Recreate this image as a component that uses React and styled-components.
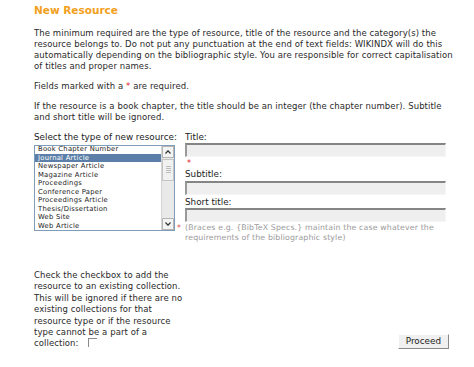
import styled, { createGlobalStyle } from "styled-components"

const GlobalStyle = createGlobalStyle`
  body {
    margin: 0;
    background: #fff;
    font-family: "DejaVu Sans", Verdana, sans-serif;
    color: #2a2a2a;
  }
`

const Page = styled.div`
  padding: 3px 0 0 34px;
  width: 421px;
`

const Heading = styled.h2`
  margin: 0;
  font-size: 10.5px;
  line-height: 14px;
  font-weight: 700;
  color: #f2a020;
`

const Para = styled.p`
  margin: ${(p) => p.$top || 9}px 0 0;
  font-size: 8.5px;
  letter-spacing: 0.08px;
  line-height: 11px;
`

const Star = styled.span`
  color: #e0202a;
`

const Form = styled.div`
  display: grid;
  grid-template-columns: 141px 261px;
  column-gap: 10px;
  margin-top: 9px;
`

const Label = styled.div`
  font-size: 8.8px;
  line-height: 11px;
  color: #222;
  white-space: nowrap;
`

const Column = styled.div`
  display: flex;
  flex-direction: column;
`

const ListBox = styled.div`
  margin-top: 2px;
  height: 84px;
  border: 1px solid #7f9db9;
  display: flex;
  background: #fff;
  overflow: hidden;
`

const Options = styled.div`
  flex: 1;
  margin-top: -0.5px;
`

const Option = styled.div`
  height: 8.5px;
  line-height: 8.5px;
  padding-left: 3px;
  font-size: 6.8px;
  letter-spacing: 0.25px;
  white-space: nowrap;
  color: ${(p) => (p.$selected ? "#fff" : "#222")};
  background: ${(p) => (p.$selected ? "#5b7fa8" : "transparent")};
`

const Scrollbar = styled.div`
  width: 12px;
  background: #e9e9e9;
  border-left: 1px solid #d4d4d4;
  display: flex;
  flex-direction: column;
`

const ScrollButton = styled.div`
  height: 10px;
  margin-top: ${(p) => (p.$bottom ? "auto" : "0")};
  background: #f4f4f4;
  border: 1px solid #b5b5b5;
  display: flex;
  align-items: center;
  justify-content: center;
`

const Thumb = styled.div`
  margin-top: 1px;
  height: 20px;
  background: #f1f1f1;
  border: 1px solid #c4c4c4;
  display: flex;
  flex-direction: column;
  justify-content: center;
  align-items: center;
  gap: 1px;
`

const Grip = styled.div`
  width: 5px;
  height: 1px;
  background: #bbb;
`

const Input = styled.div`
  margin-top: ${(p) => p.$top || 0}px;
  height: 11px;
  background: #efefef;
  border-top: 2px solid #858585;
  border-left: 2px solid #9a9a9a;
  border-bottom: 1px solid #f6f6f6;
  border-right: 1px solid #f6f6f6;
`

const FieldLabel = styled(Label)`
  margin-top: ${(p) => p.$top || 0}px;
`

const Required = styled.div`
  height: 12px;
  font-size: 8px;
  line-height: 13px;
  color: #e0202a;
  padding-left: 2px;
`

const Hint = styled.div`
  position: relative;
  margin-top: 1px;
  font-size: 7.8px;
  letter-spacing: 0.15px;
  line-height: 10px;
  color: #9a9a9a;
`

const HintStar = styled.span`
  position: absolute;
  left: -8px;
  top: 0;
  color: #e0202a;
`

const Bottom = styled.div`
  margin-top: 27px;
  display: flex;
  justify-content: space-between;
  align-items: flex-end;
`

const Note = styled.div`
  width: 150px;
  font-size: 8.5px;
  letter-spacing: 0.08px;
  line-height: 11.4px;
`

const Checkbox = styled.span`
  display: inline-block;
  vertical-align: -1px;
  margin-left: 9px;
  width: 8px;
  height: 8px;
  border-top: 1px solid #8a8a8a;
  border-left: 1px solid #8a8a8a;
`

const Button = styled.button`
  margin: 0 6px 1px 0;
  padding: 0 7px;
  height: 15px;
  font-family: "DejaVu Sans", Verdana, sans-serif;
  font-size: 8.8px;
  line-height: 13px;
  color: #222;
  background: #f0f0f0;
  border: 1px solid #fff;
  border-right-color: #8a8a8a;
  border-bottom-color: #8a8a8a;
`

const types = [
  "Book Chapter Number",
  "Journal Article",
  "Newspaper Article",
  "Magazine Article",
  "Proceedings",
  "Conference Paper",
  "Proceedings Article",
  "Thesis/Dissertation",
  "Web Site",
  "Web Article",
  "Web Encyclopedia",
]

function Arrow({ down }) {
  return (
    <svg width="6" height="4" viewBox="0 0 6 4">
      <path
        d={down ? "M0.5 0.5 L3 3.2 L5.5 0.5" : "M0.5 3.5 L3 0.8 L5.5 3.5"}
        fill="none"
        stroke="#333"
        strokeWidth="1.2"
      />
    </svg>
  )
}

export default function App() {
  return (
    <>
      <GlobalStyle />
      <Page>
        <Heading>New Resource</Heading>
        <Para $top={10.5}>
          The minimum required are the type of resource, title of the resource
          and the category(s) the resource belongs to. Do not put any
          punctuation at the end of text fields: WIKINDX will do this
          automatically depending on the bibliographic style. You are
          responsible for correct capitalisation of titles and proper names.
        </Para>
        <Para>
          Fields marked with a <Star>*</Star> are required.
        </Para>
        <Para>
          If the resource is a book chapter, the title should be an integer
          (the chapter number). Subtitle and short title will be ignored.
        </Para>
        <Form>
          <Column>
            <Label>Select the type of new resource:</Label>
            <ListBox>
              <Options>
                {types.map((t) => (
                  <Option key={t} $selected={t === "Journal Article"}>
                    {t}
                  </Option>
                ))}
              </Options>
              <Scrollbar>
                <ScrollButton>
                  <Arrow />
                </ScrollButton>
                <Thumb>
                  <Grip />
                  <Grip />
                  <Grip />
                  <Grip />
                </Thumb>
                <ScrollButton $bottom>
                  <Arrow down />
                </ScrollButton>
              </Scrollbar>
            </ListBox>
          </Column>
          <Column>
            <FieldLabel>Title:</FieldLabel>
            <Input $top={0.5} />
            <Required>*</Required>
            <FieldLabel>Subtitle:</FieldLabel>
            <Input $top={1} />
            <FieldLabel $top={1.5}>Short title:</FieldLabel>
            <Input $top={0.5} />
            <Hint>
              <HintStar>*</HintStar>
              (Braces e.g. {"{BibTeX Specs.}"} maintain the case whatever the
              requirements of the bibliographic style)
            </Hint>
          </Column>
        </Form>
        <Bottom>
          <Note>
            Check the checkbox to add the resource to an existing collection.
            This will be ignored if there are no existing collections for that
            resource type or if the resource type cannot be a part of a
            collection:
            <Checkbox />
          </Note>
          <Button>Proceed</Button>
        </Bottom>
      </Page>
    </>
  )
}
